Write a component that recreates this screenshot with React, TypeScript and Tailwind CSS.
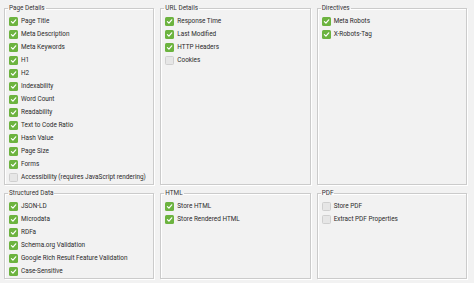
import React from "react";

type Item = { label: string; checked: boolean };
type Group = { title: string; items: Item[] };

const on = (label: string): Item => ({ label, checked: true });
const off = (label: string): Item => ({ label, checked: false });

const TOP: Group[] = [
  {
    title: "Page Details",
    items: [
      on("Page Title"),
      on("Meta Description"),
      on("Meta Keywords"),
      on("H1"),
      on("H2"),
      on("Indexability"),
      on("Word Count"),
      on("Readability"),
      on("Text to Code Ratio"),
      on("Hash Value"),
      on("Page Size"),
      on("Forms"),
      off("Accessibility (requires JavaScript rendering)"),
    ],
  },
  {
    title: "URL Details",
    items: [on("Response Time"), on("Last Modified"), on("HTTP Headers"), off("Cookies")],
  },
  {
    title: "Directives",
    items: [on("Meta Robots"), on("X-Robots-Tag")],
  },
];

const BOTTOM: Group[] = [
  {
    title: "Structured Data",
    items: [
      on("JSON-LD"),
      on("Microdata"),
      on("RDFa"),
      on("Schema.org Validation"),
      on("Google Rich Result Feature Validation"),
      on("Case-Sensitive"),
    ],
  },
  {
    title: "HTML",
    items: [on("Store HTML"), on("Store Rendered HTML")],
  },
  {
    title: "PDF",
    items: [off("Store PDF"), off("Extract PDF Properties")],
  },
];

function Box({ checked }: { checked: boolean }) {
  if (!checked) {
    return <span className="w-[9px] h-[9px] rounded-[1.5px] border border-[#cfcfcf] bg-[#e6e6e6] shrink-0" />;
  }
  return (
    <span className="w-[9px] h-[9px] rounded-[1.5px] bg-[#6cb33f] shrink-0 flex items-center justify-center">
      <svg viewBox="0 0 10 10" className="w-[7px] h-[7px]">
        <path d="M2 5.2 L4.2 7.4 L8.2 2.6" fill="none" stroke="#fff" strokeWidth="1.7" strokeLinecap="round" strokeLinejoin="round" />
      </svg>
    </span>
  );
}

function Panel({ group }: { group: Group }) {
  return (
    <fieldset className="border border-[#cbcbcb] shadow-[1px_1px_0_#fff,inset_1px_1px_0_#fff] min-w-0">
      <legend className="ml-[3px] px-[1px] leading-[9px] text-[#333]">{group.title}</legend>
      <div className="pt-[2px] pl-[4px] flex flex-col">
        {group.items.map(item => (
          <div key={item.label} className="h-[13px] flex items-center gap-[3px] whitespace-nowrap">
            <Box checked={item.checked} />
            <span className="text-[#2a2a2a]">{item.label}</span>
          </div>
        ))}
      </div>
    </fieldset>
  );
}

export default function App() {
  return (
    <div
      className="w-[474px] h-[283px] bg-[#f2f2f2] pt-[4px] pl-[4px] pr-[7px] text-[6.4px] overflow-hidden"
      style={{ fontFamily: "Roboto, 'Liberation Sans', sans-serif" }}
    >
      <div className="grid grid-cols-3 grid-rows-[181px_90px] gap-x-[6px] gap-y-[4px] h-[275px]">
        {TOP.map(g => (
          <Panel key={g.title} group={g} />
        ))}
        {BOTTOM.map(g => (
          <Panel key={g.title} group={g} />
        ))}
      </div>
    </div>
  );
}
